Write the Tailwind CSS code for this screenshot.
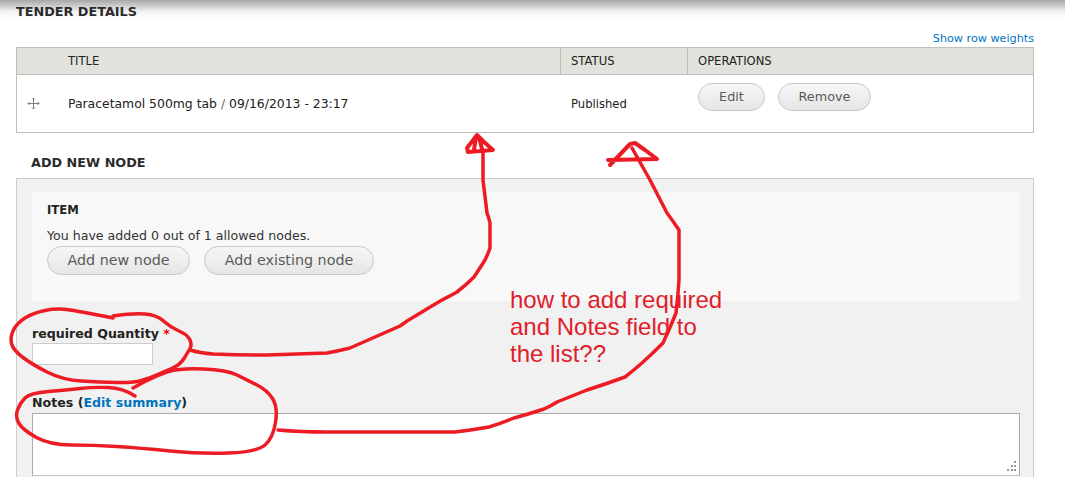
<!DOCTYPE html>
<html>
<head>
<meta charset="utf-8">
<script src="https://cdn.jsdelivr.net/npm/@tailwindcss/browser@4"></script>
</head>
<body class="bg-white">
<div class="relative w-[1065px] h-[477px] overflow-hidden bg-white font-['DejaVu_Sans',sans-serif] text-[#333]">
  <div class="h-[20px] pl-4 pt-[4px] bg-linear-to-b from-[#a8a8a8] via-[#f4f4f4] via-60% to-white">
    <h2 class="text-[12.8px] leading-[15px] font-bold text-[#2b2b2b]">TENDER DETAILS</h2>
  </div>
  <div class="h-[27px] pr-[31px] pt-[11px] flex justify-end text-[11.2px] leading-[15px] text-[#0074bd]">Show row weights</div>

  <div class="mx-4 w-[1018px] h-[86px] border border-[#bebfb9] flex flex-col">
    <div class="h-[27px] shrink-0 bg-[#e1e2dc] border-b border-[#bebfb9] flex text-[11.6px] text-[#222] items-center">
      <div class="w-[543px] h-full flex items-center pl-[51px] pt-[1px]">TITLE</div>
      <div class="w-[127px] h-full flex items-center pl-[10px] pt-[1px] border-l border-[#bebfb9]">STATUS</div>
      <div class="flex-1 h-full flex items-center pl-[10px] pt-[1px] border-l border-[#bebfb9]">OPERATIONS</div>
    </div>
    <div class="flex-1 flex text-[#222]">
      <div class="w-[543px] flex items-center">
        <svg class="ml-[10px] mr-[28px] shrink-0" width="13" height="13" viewBox="0 0 13 13" fill="none" stroke="#7d7d7d" stroke-width="1">
          <path d="M6.5 1V12M1 6.5H12"/>
          <path d="M5 2.5L6.5 1L8 2.5M5 10.5L6.5 12L8 10.5M2.5 5L1 6.5L2.5 8M10.5 5L12 6.5L10.5 8"/>
        </svg>
        <span class="text-[12.4px] pt-[2px]">Paracetamol 500mg tab <span class="text-[#666]">/</span> 09/16/2013 - 23:17</span>
      </div>
      <div class="w-[127px] pl-[11px] pt-[2px] flex items-center text-[11.6px]">Published</div>
      <div class="flex-1 pl-[11px] pt-[8px] flex items-start gap-[13px]">
        <div class="w-[67px] h-[28px] rounded-[14px] border border-[#c8c8c8] bg-linear-to-b from-[#f6f6f6] to-[#e6e6e6] text-[12.8px] text-[#5a5a5a] flex items-center justify-center">Edit</div>
        <div class="w-[93px] h-[28px] rounded-[14px] border border-[#c8c8c8] bg-linear-to-b from-[#f6f6f6] to-[#e6e6e6] text-[12.8px] text-[#5a5a5a] flex items-center justify-center">Remove</div>
      </div>
    </div>
  </div>

  <h3 class="ml-[31px] mt-[22px] h-[23px] text-[12.8px] leading-[16px] font-bold text-[#2b2b2b]">ADD NEW NODE</h3>

  <div class="mx-4 w-[1018px] h-[320px] border border-[#ccc] bg-[#f1f1f1] px-[15px] pt-[13px]">
    <div class="w-[988px] h-[109px] bg-[#f8f8f8] pl-[15px] pt-[12px]">
      <div class="text-[11.6px] leading-[13px] font-bold text-[#222]">ITEM</div>
      <div class="mt-[12px] text-[12.6px] leading-[13px] text-[#333]">You have added 0 out of 1 allowed nodes.</div>
      <div class="mt-[4px] flex gap-[14px] text-[14.3px] text-[#5a5a5a]">
        <div class="w-[143px] h-[29px] rounded-[15px] border border-[#c8c8c8] bg-linear-to-b from-[#f6f6f6] to-[#e6e6e6] flex items-center justify-center">Add new node</div>
        <div class="w-[170px] h-[29px] rounded-[15px] border border-[#c8c8c8] bg-linear-to-b from-[#f6f6f6] to-[#e6e6e6] flex items-center justify-center">Add existing node</div>
      </div>
    </div>
    <div class="mt-[26px] text-[12.6px] leading-[14px] font-bold text-[#222]">required Quantity <span class="text-[#e00]">*</span></div>
    <div class="mt-[2px] w-[121px] h-[22px] bg-white border border-[#ccc]"></div>
    <div class="mt-[31px] text-[12.6px] leading-[14px] font-bold text-[#222]">Notes (<span class="text-[#0074bd]">Edit summary</span>)</div>
    <div class="relative mt-[3px] w-[988px] h-[63px] bg-white border border-[#aaa] border-b-[#ccc]">
      <svg class="absolute right-[2px] bottom-[2px]" width="12" height="12" viewBox="0 0 12 12" fill="#999">
        <rect x="9" y="0" width="2" height="2"/><rect x="6" y="4" width="2" height="2"/><rect x="9" y="4" width="2" height="2"/>
        <rect x="2" y="8" width="2" height="2"/><rect x="6" y="8" width="2" height="2"/><rect x="9" y="8" width="2" height="2"/>
      </svg>
    </div>
  </div>

  <div class="absolute left-[510px] top-[286px] font-['Liberation_Sans',sans-serif] text-[24px] leading-[27px] text-[#e0202a]">how to add required<br>and Notes field to<br>the list??</div>

  <svg class="absolute left-0 top-0 pointer-events-none" width="1065" height="477" viewBox="0 0 1065 477" fill="none" stroke="#ed1c24" stroke-width="3.5" stroke-linejoin="round" stroke-linecap="round">
    <path d="M113 318Q83 312 70 310Q57 308 45 310.5Q33 313 25 318Q17 323 13.5 330Q10 337 11.5 343.5Q13 350 23 357.5Q33 365 48 372.5Q63 380 81.5 381Q100 382 116.5 382.5Q133 383 141.5 380.5Q150 378 156.5 375Q163 372 171.5 368.5Q180 365 184 358.5Q188 352 190 348.5Q192 345 190 340Q188 335 179 331Q170 327 163.5 321Q157 315 145 314Q133 313 113 316"/>
    <path d="M135 396Q123 388 108 387.5Q93 387 80 388.5Q67 390 48.5 391.5Q30 393 25 398Q20 403 17.5 410Q15 417 19 423.5Q23 430 36.5 437.5Q50 445 71.5 445Q93 445 116.5 446.5Q140 448 170 451Q200 454 228.5 453Q257 452 265 445Q273 438 275.5 422.5Q278 407 272.5 398.5Q267 390 257 385Q247 380 237 375Q227 370 203.5 369Q180 368 168.5 371.5Q157 375 145 381.5L133 388"/>
    <path d="M190 350Q200 353 213 354Q240 355 267 355Q297 354 327 353Q338 351 350 348Q375 337 400 326Q408 320 417 315Q430 307 442 300Q450 296 457 292Q466 285 474 277Q480 268 485 260Q488 254 490 248L490 223Q489 218 487 213L483 180L483 150"/>
    <path stroke-width="4" d="M477 135L467 148L468 152L493 150L484 142ZM476 137L474 150M479 137L482 149"/>
    <path d="M278 430Q300 432 327 432L455 432Q472 430 489 427Q502 423 514 418Q529 414 544 409Q551 406 557 402Q572 396 587 390Q606 384 625 377Q634 370 642 363Q653 353 663 343Q670 328 676 313Q678 296 679 280L679 230Q673 221 667 213L650 180L632 148"/>
    <path stroke-width="4" d="M610 165L630 144L635 143L645 150L657 159L608 160"/>
  </svg>
</div>
</body>
</html>
